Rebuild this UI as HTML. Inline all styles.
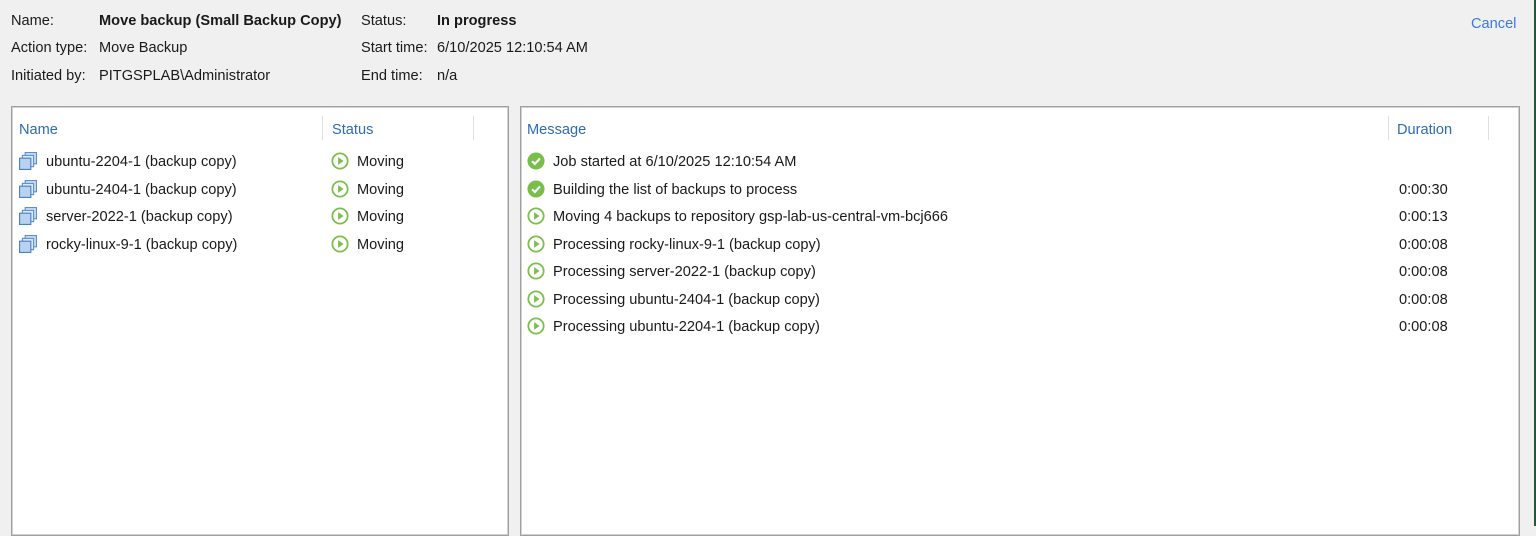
<!DOCTYPE html><html><head><style>
body{margin:0;width:1536px;height:526px;background:#f0f0f0;font-family:"Liberation Sans",sans-serif;font-size:14.6px;color:#1a1a1a;position:relative;overflow:hidden}
.a{position:absolute;white-space:nowrap;margin-top:1px}
.b{font-weight:bold}
.panel{position:absolute;top:106px;height:430px;background:#fff;border:1px solid #a0a0a0;box-shadow:inset 0 0 0 1px #d0d0d0;box-sizing:border-box}
.h{color:#2e6bb5}
.sep{position:absolute;top:116px;width:1px;height:24px;background:#e0e0e0}
.ic{position:absolute;width:18px;height:18px}
</style></head><body>
<div class="a" style="left:11px;top:12px">Name:</div>
<div class="a b" style="left:99px;top:12px">Move backup (Small Backup Copy)</div>
<div class="a" style="left:361px;top:12px">Status:</div>
<div class="a b" style="left:437px;top:12px">In progress</div>
<div class="a" style="left:11px;top:39px">Action type:</div>
<div class="a" style="left:99px;top:39px">Move Backup</div>
<div class="a" style="left:361px;top:39px">Start time:</div>
<div class="a" style="left:437px;top:39px">6/10/2025 12:10:54 AM</div>
<div class="a" style="left:11px;top:67px">Initiated by:</div>
<div class="a" style="left:99px;top:67px">PITGSPLAB\Administrator</div>
<div class="a" style="left:361px;top:67px">End time:</div>
<div class="a" style="left:437px;top:67px">n/a</div>
<div class="a" style="left:1471px;top:15px;color:#3b78e7">Cancel</div>
<div style="position:absolute;left:1534px;top:0;width:2px;height:526px;background:#1f5a3a"></div>

<div class="panel" style="left:11px;width:498px"></div>
<div class="panel" style="left:520px;width:1000px"></div>
<div class="a h" style="left:19px;top:121px">Name</div>
<div class="sep" style="left:322px"></div>
<div class="a h" style="left:332px;top:121px">Status</div>
<div class="sep" style="left:473px"></div>
<div class="a h" style="left:527px;top:121px">Message</div>
<div class="sep" style="left:1388px"></div>
<div class="a h" style="left:1397px;top:121px">Duration</div>
<div class="sep" style="left:1488px"></div>

<svg width="0" height="0" style="position:absolute"><defs>
<g id="vm"><rect x="5.5" y="0.5" width="10" height="10" fill="#cfe0f3" stroke="#5b8fcf"/><rect x="3" y="3" width="10" height="10" fill="#dde9f7" stroke="#5b8fcf"/><rect x="0.5" y="5.5" width="10" height="10" fill="#b8d2ef" stroke="#4a80c4"/></g>
<g id="pl"><circle cx="8" cy="8" r="6.8" fill="#fff" stroke="#7cc04b" stroke-width="1.6"/><path d="M6.3 4.6L11.2 8L6.3 11.4Z" fill="#7cc04b"/></g>
<g id="ok"><circle cx="8" cy="8" r="7.6" fill="#79bd4a"/><path d="M4.5 8.2L7 10.6L11.5 5.8" fill="none" stroke="#fff" stroke-width="1.9"/></g>
</defs></svg>

<svg class="ic" viewBox="0 0 16 16" style="left:19px;top:152px"><use href="#vm"/></svg><div class="a" style="left:46px;top:153px">ubuntu-2204-1 (backup copy)</div>
<svg class="ic" viewBox="0 0 16 16" style="left:19px;top:180px"><use href="#vm"/></svg><div class="a" style="left:46px;top:181px">ubuntu-2404-1 (backup copy)</div>
<svg class="ic" viewBox="0 0 16 16" style="left:19px;top:207px"><use href="#vm"/></svg><div class="a" style="left:46px;top:208px">server-2022-1 (backup copy)</div>
<svg class="ic" viewBox="0 0 16 16" style="left:19px;top:235px"><use href="#vm"/></svg><div class="a" style="left:46px;top:236px">rocky-linux-9-1 (backup copy)</div>
<svg class="ic" viewBox="0 0 16 16" style="left:331px;top:152px"><use href="#pl"/></svg><div class="a" style="left:357px;top:153px">Moving</div>
<svg class="ic" viewBox="0 0 16 16" style="left:331px;top:180px"><use href="#pl"/></svg><div class="a" style="left:357px;top:181px">Moving</div>
<svg class="ic" viewBox="0 0 16 16" style="left:331px;top:207px"><use href="#pl"/></svg><div class="a" style="left:357px;top:208px">Moving</div>
<svg class="ic" viewBox="0 0 16 16" style="left:331px;top:235px"><use href="#pl"/></svg><div class="a" style="left:357px;top:236px">Moving</div>

<svg class="ic" viewBox="0 0 16 16" style="left:527px;top:152px"><use href="#ok"/></svg><div class="a" style="left:553px;top:153px">Job started at 6/10/2025 12:10:54 AM</div>
<svg class="ic" viewBox="0 0 16 16" style="left:527px;top:180px"><use href="#ok"/></svg><div class="a" style="left:553px;top:181px">Building the list of backups to process</div>
<svg class="ic" viewBox="0 0 16 16" style="left:527px;top:207px"><use href="#pl"/></svg><div class="a" style="left:553px;top:208px">Moving 4 backups to repository gsp-lab-us-central-vm-bcj666</div>
<svg class="ic" viewBox="0 0 16 16" style="left:527px;top:235px"><use href="#pl"/></svg><div class="a" style="left:553px;top:236px">Processing rocky-linux-9-1 (backup copy)</div>
<svg class="ic" viewBox="0 0 16 16" style="left:527px;top:262px"><use href="#pl"/></svg><div class="a" style="left:553px;top:263px">Processing server-2022-1 (backup copy)</div>
<svg class="ic" viewBox="0 0 16 16" style="left:527px;top:290px"><use href="#pl"/></svg><div class="a" style="left:553px;top:291px">Processing ubuntu-2404-1 (backup copy)</div>
<svg class="ic" viewBox="0 0 16 16" style="left:527px;top:317px"><use href="#pl"/></svg><div class="a" style="left:553px;top:318px">Processing ubuntu-2204-1 (backup copy)</div>
<div class="a" style="left:1399px;top:181px">0:00:30</div>
<div class="a" style="left:1399px;top:208px">0:00:13</div>
<div class="a" style="left:1399px;top:236px">0:00:08</div>
<div class="a" style="left:1399px;top:263px">0:00:08</div>
<div class="a" style="left:1399px;top:291px">0:00:08</div>
<div class="a" style="left:1399px;top:318px">0:00:08</div>
</body></html>
